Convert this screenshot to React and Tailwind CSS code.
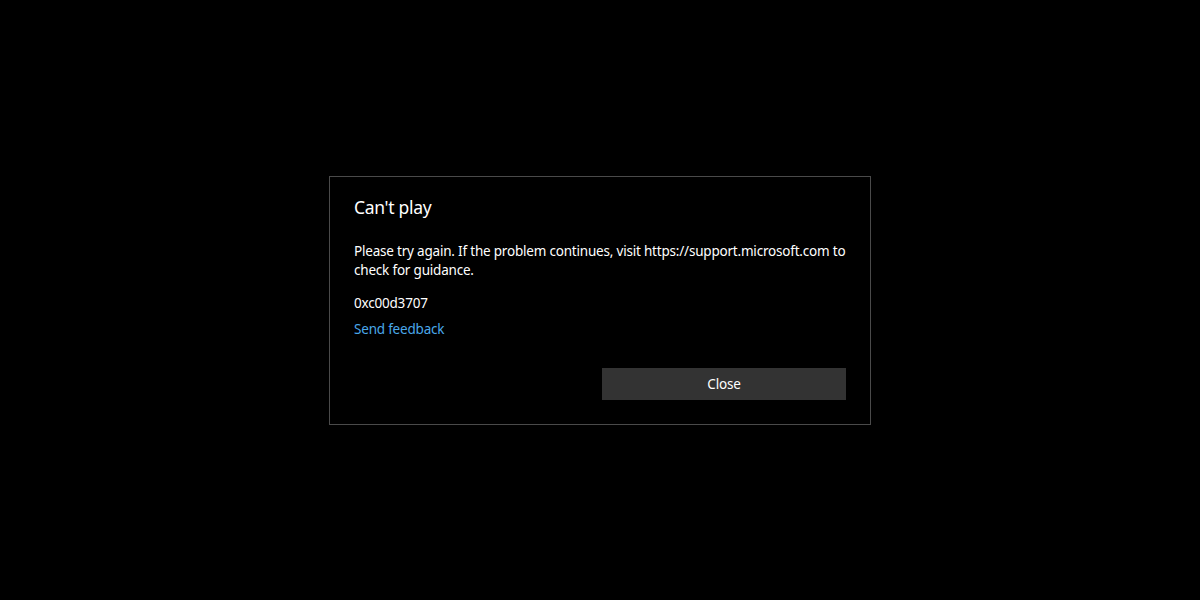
const App = () => {
  return (
    <div
      className="w-[1200px] h-[600px] bg-black flex items-center justify-center"
      style={{ fontFamily: '"Noto Sans", "Open Sans", sans-serif' }}
    >
      <div className="w-[542px] h-[249px] border border-[#4a4a4a] bg-black pl-6 pr-[22px] pt-4 pb-6 flex flex-col">
        <h1 className="text-[17.5px] leading-7 tracking-[-0.3px] text-white">Can't play</h1>
        <p className="mt-[21px] text-[13.5px] leading-[19px] tracking-[-0.2px] text-white">
          Please try again. If the problem continues, visit https://support.microsoft.com to check for guidance.
        </p>
        <p className="mt-[14px] text-[13.5px] leading-[19px] tracking-[-0.2px] text-white">0xc00d3707</p>
        <a className="mt-[7px] text-[13.5px] leading-[19px] tracking-[-0.2px] text-[#4aa8ea] w-fit">Send feedback</a>
        <div className="mt-auto flex justify-end pr-[2px]">
          <button className="w-[244px] h-8 pt-[2px] bg-[#333333] text-white text-[13.5px] tracking-[-0.2px]">Close</button>
        </div>
      </div>
    </div>
  );
};

export default App;
